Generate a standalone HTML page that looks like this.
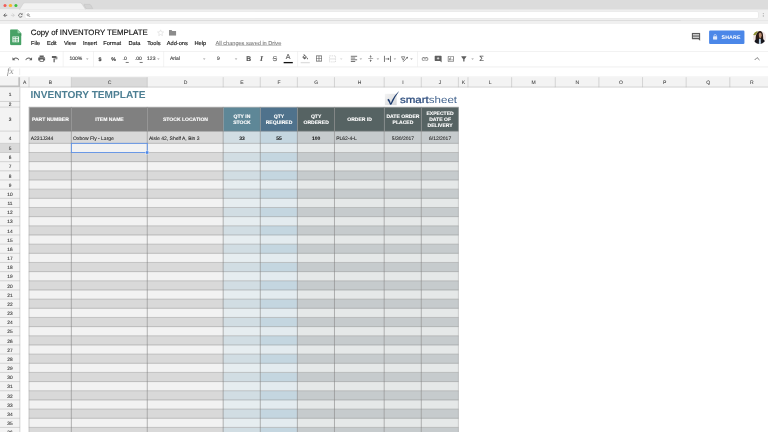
<!DOCTYPE html><html><head><meta charset="utf-8"><title>Copy of INVENTORY TEMPLATE</title><style>
*{box-sizing:border-box;margin:0;padding:0}
html,body{width:768px;height:432px;overflow:hidden;background:#fff}
body{text-rendering:geometricPrecision;font-family:"Liberation Sans",Arial,sans-serif}
#root{position:absolute;left:0;top:0;width:1760px;height:990px;transform:scale(0.4363636);transform-origin:0 0}
#blur{position:absolute;left:-55px;top:-55px;width:1870px;height:1100px;filter:blur(0.8px);background:#fff;overflow:hidden}
#in{position:absolute;left:55px;top:55px;width:1760px;height:990px}
.a{position:absolute}
.t{position:absolute;white-space:nowrap}
.menu{position:absolute;top:90px;font-size:13px;color:#111;-webkit-text-stroke:0.3px #111;white-space:nowrap;line-height:16px}
.ch{position:absolute;top:177px;height:23px;background:#f3f3f3;font-size:11.5px;color:#444;text-align:center;line-height:24px;-webkit-text-stroke:0.15px #444}
.rh{position:absolute;left:0;width:46px;background:#f3f3f3;font-size:11px;color:#333;text-align:center;-webkit-text-stroke:0.2px #333;overflow:hidden}
.c{position:absolute;font-size:11.45px;color:#111;white-space:nowrap;overflow:hidden;-webkit-text-stroke:0.08px #111}
.h{color:#fff;font-weight:bold;text-align:center;display:flex;align-items:center;justify-content:center;line-height:14.15px;white-space:normal;padding-top:3.5px;font-size:11.6px;-webkit-text-stroke:0.25px #fff}
.hl{position:absolute;height:2.3px;background:rgba(144,144,144,0.4)}
.vl{position:absolute;width:2.3px;background:rgba(140,140,140,0.52)}
.gh{position:absolute;height:2.3px;background:rgba(0,0,0,0.1)}
.gv{position:absolute;width:2.3px;background:rgba(0,0,0,0.1)}
.tb{position:absolute;top:118px;height:35px}
.sep{position:absolute;top:118px;width:1px;height:35px;background:#e3e3e3}
.car{position:absolute;top:133.5px;width:0;height:0;border-left:3.2px solid transparent;border-right:3.2px solid transparent;border-top:3.6px solid #999}
.ic{position:absolute}
</style></head><body><div id="root"><div id="blur"><div id="in">
<div class="a" style="left:-55px;top:-55px;width:1870px;height:77px;background:#dcdcdc"></div>
<svg class="a" style="left:40px;top:0" width="200" height="23" viewBox="0 0 200 23"><path d="M4 23 L13 8.5 Q14.5 6.5 17 6.5 L143 6.5 Q146 6.5 147.5 8.5 L157 23 Z" fill="#f2f2f2" stroke="#c4c4c4" stroke-width="1"/><path d="M153.5 10 L165 10 Q167 10 168 11.800 L172 18.500 Q172.800 20.300 170.800 20.300 L159.500 20.300 Q157.500 20.300 156.600 18.800 L152.600 11.800 Q151.800 10 153.500 10Z" fill="#d3d3d3" stroke="#bdbdbd" stroke-width="1"/></svg>
<div class="a" style="left:7.6px;top:8.6px;width:7.8px;height:7.8px;border-radius:50%;background:#f25b57"></div>
<div class="a" style="left:20.3px;top:8.6px;width:7.8px;height:7.8px;border-radius:50%;background:#f6b72e"></div>
<div class="a" style="left:32.5px;top:8.6px;width:7.8px;height:7.8px;border-radius:50%;background:#3cc13f"></div>
<div class="a" style="left:-55px;top:22px;width:1870px;height:24px;background:#f0f0f0"></div>
<div class="a" style="left:-55px;top:45.5px;width:1870px;height:2.8px;background:#e3e3e3"></div>
<div class="a" style="left:200px;top:20.7px;width:1600px;height:2.3px;background:#e5e5e5"></div>
<div class="a" style="left:-55px;top:48.3px;width:1870px;height:6.5px;background:#f0f0f0"></div>
<div class="a" style="left:0;top:45.5px;width:1560px;height:2.8px;background:#dcdcdc"></div>
<div class="a" style="left:58px;top:27px;width:1679px;height:15px;background:#fff;border-radius:3px;box-shadow:0 0 0 1px #e2e2e2"></div>
<svg class="a" style="left:4px;top:26px" width="70" height="18" viewBox="0 0 70 18"><path d="M12.5 9 H5 M8.6 5 L4.6 9 L8.6 13" fill="none" stroke="#5a5a5a" stroke-width="1.9"/><path d="M21 9 H28.5 M24.9 5 L28.9 9 L24.9 13" fill="none" stroke="#cdcdcd" stroke-width="1.9"/><path d="M45.8 6.4 A4.1 4.1 0 1 0 46.8 10.3" fill="none" stroke="#5a5a5a" stroke-width="1.7"/><path d="M47.6 3.6 V7.8 H43.4 Z" fill="#5a5a5a"/><circle cx="60.5" cy="8" r="2.5" fill="none" stroke="#666" stroke-width="1.4"/><path d="M62.3 9.9 L65 12.8" stroke="#666" stroke-width="1.5"/></svg>
<div class="a" style="left:1747.6px;top:30.3px;width:2px;height:2px;border-radius:50%;background:#777"></div>
<div class="a" style="left:1747.6px;top:33.6px;width:2px;height:2px;border-radius:50%;background:#777"></div>
<div class="a" style="left:1747.6px;top:36.9px;width:2px;height:2px;border-radius:50%;background:#777"></div>
<svg class="a" style="left:22.5px;top:67px" width="26.5" height="36.5" viewBox="0 0 28 38" preserveAspectRatio="none"><path d="M2.600 0 H18 L28 10 V35.400 Q28 38 25.400 38 H2.600 Q0 38 0 35.400 V2.600 Q0 0 2.600 0Z" fill="#47a266"/><path d="M18 0 L28 10 H20.600 Q18 10 18 7.400Z" fill="#92d0a7"/><path d="M20 10 H28 V16Z" fill="#3b8f57"/><path d="M5.800 17.200 H21.800 V31.200 H5.800Z M8 19.400 V21.400 H11.600 V19.400Z M13.600 19.400 V21.400 H19.600 V19.400Z M8 23.200 V25.200 H11.600 V23.200Z M13.600 23.200 V25.200 H19.600 V23.200Z M8 27 V29 H11.600 V27Z M13.600 27 V29 H19.600 V27Z" fill="#f4faf6" fill-rule="evenodd"/></svg>
<div class="t" id="title" style="left:70.5px;top:64.5px;font-size:17.9px;line-height:21px;color:#111;-webkit-text-stroke:0.35px #111">Copy of INVENTORY TEMPLATE</div>
<svg class="a" style="left:359px;top:66px" width="18" height="18" viewBox="0 0 24 24"><path d="M12 3.2 L14.7 9.2 L21.2 9.9 L16.3 14.3 L17.7 20.8 L12 17.5 L6.3 20.8 L7.7 14.3 L2.8 9.9 L9.3 9.2Z" fill="none" stroke="#d4d4d4" stroke-width="1.6"/></svg>
<svg class="a" style="left:387px;top:68.5px" width="17" height="13" viewBox="0 0 17 13"><path d="M1.2 0 H6.2 L7.8 1.8 H15.8 Q17 1.8 17 3 V11.8 Q17 13 15.8 13 H1.2 Q0 13 0 11.8 V1.2 Q0 0 1.2 0Z" fill="#8c8c8c"/></svg>
<div class="menu" style="left:71px">File</div>
<div class="menu" style="left:107.5px">Edit</div>
<div class="menu" style="left:146.5px">View</div>
<div class="menu" style="left:190px">Insert</div>
<div class="menu" style="left:236.5px">Format</div>
<div class="menu" style="left:294.5px">Data</div>
<div class="menu" style="left:337.5px">Tools</div>
<div class="menu" style="left:382px">Add-ons</div>
<div class="menu" style="left:445.5px">Help</div>
<div class="menu" style="left:494px;color:#777;-webkit-text-stroke:0.15px #777;text-decoration:underline;letter-spacing:-0.1px">All changes saved in Drive</div>
<svg class="a" style="left:1585px;top:75px" width="20" height="19" viewBox="0 0 20 19"><path d="M1.5 0 H18.5 Q20 0 20 1.5 V19 L15.5 14.8 H1.5 Q0 14.8 0 13.3 V1.5 Q0 0 1.5 0Z" fill="#5b5b5b"/><rect x="3" y="3" width="14" height="2" fill="#dcdcdc"/><rect x="3" y="6.4" width="14" height="2" fill="#dcdcdc"/><rect x="3" y="9.8" width="14" height="2" fill="#dcdcdc"/></svg>
<div class="a" style="left:1625px;top:69.5px;width:81px;height:31.5px;background:#4b87e8;border-radius:2.5px"></div>
<svg class="a" style="left:1634px;top:78px" width="10" height="13" viewBox="0 0 10 13"><rect x="0" y="5" width="10" height="8" rx="1" fill="#dfe9fb"/><path d="M2.4 5.5 V3.6 A2.6 2.6 0 0 1 7.6 3.6 V5.5" fill="none" stroke="#dfe9fb" stroke-width="1.5"/></svg>
<div class="t" style="left:1653.5px;top:78.5px;font-size:12px;line-height:14px;font-weight:bold;color:#fff;letter-spacing:0.3px">SHARE</div>
<svg class="a" style="left:1725px;top:69.500px" width="31" height="31" viewBox="0 0 31 31"><defs><clipPath id="av"><circle cx="15.500" cy="15.500" r="15.300"/></clipPath></defs><g clip-path="url(#av)"><rect width="31" height="31" fill="#f1e6e5"/><path d="M0 9 Q2 2 9 0.500 L12 3 Q9 7 6 10.500 Q3 11 0 9Z" fill="#8c9030"/><path d="M7 26 Q5.500 12 10 5.500 Q13 0.800 17 1.200 Q22.500 2 23.500 10 Q24.200 18 24 26Z" fill="#2b1a13"/><path d="M14 8 Q14.500 5 17.300 5.200 Q20.600 6 20.500 11 Q20 16.500 17.500 17.700 Q15 17 14.300 13Z" fill="#bd8f73"/><path d="M3 31 Q3.500 21 10 19 L15 18.500 L19 18.500 L23 19.500 Q28.500 22 29 31Z" fill="#16161d"/><path d="M14.400 19 L18.400 19 L18.800 31 L14 31Z" fill="#b7cde0"/><path d="M9 20 Q8 12 11 7 Q13 12 14.200 19Z" fill="#2b1a13"/></g></svg>
<div class="a" style="left:-55px;top:117px;width:1870px;height:1px;background:#e0e0e0"></div>
<div class="a" style="left:-55px;top:153px;width:1870px;height:1px;background:#dadada"></div>
<div class="sep" style="left:144px"></div>
<div class="sep" style="left:213.5px"></div>
<div class="sep" style="left:375px"></div>
<div class="sep" style="left:681.5px"></div>
<div class="sep" style="left:956px"></div>
<div class="car" style="left:196.8px;"></div>
<div class="car" style="left:360.3px;"></div>
<div class="car" style="left:464.8px;"></div>
<div class="car" style="left:537.8px;"></div>
<div class="car" style="left:778.8px;border-top-color:#d0d0d0"></div>
<div class="car" style="left:823.8px;"></div>
<div class="car" style="left:862.8px;"></div>
<div class="car" style="left:902.3px;"></div>
<div class="car" style="left:940.3px;"></div>
<div class="car" style="left:1079.8px;"></div>
<svg class="ic" style="left:26.5px;top:125.5px" width="18" height="18" viewBox="0 0 24 24"><path d="M12.5 8c-2.65 0-5.05.99-6.9 2.6L2 7v9h9l-3.620-3.620c1.390-1.160 3.160-1.880 5.120-1.880 3.540 0 6.550 2.310 7.600 5.500l2.370-.78C21.080 11.030 17.150 8 12.500 8z" fill="#5f5f5f"/></svg>
<svg class="ic" style="left:57.0px;top:125.5px" width="18" height="18" viewBox="0 0 24 24"><path d="M18.400 10.600C16.550 8.990 14.150 8 11.500 8c-4.650 0-8.580 3.030-9.960 7.220L3.900 16c1.050-3.190 4.050-5.500 7.600-5.500 1.950 0 3.730.72 5.120 1.880L13 16h9V7l-3.600 3.600z" fill="#5f5f5f"/></svg>
<svg class="ic" style="left:86.0px;top:125.0px" width="19" height="19" viewBox="0 0 24 24"><path d="M19 8H5c-1.660 0-3 1.340-3 3v6h4v4h12v-4h4v-6c0-1.660-1.340-3-3-3zm-3 11H8v-5h8v5zm3-7c-.55 0-1-.45-1-1s.45-1 1-1 1 .45 1 1-.45 1-1 1zm-1-9H6v4h12V3z" fill="#5f5f5f"/></svg>
<svg class="ic" style="left:116.2px;top:126.8px" width="17.5" height="17.5" viewBox="0 0 24 24"><path d="M18 4V3c0-.55-.45-1-1-1H5c-.55 0-1 .45-1 1v4c0 .55.45 1 1 1h12c.55 0 1-.45 1-1V6h1v4H9v11c0 .55.45 1 1 1h2c.55 0 1-.45 1-1v-9h8V4h-3z" fill="#5f5f5f"/></svg>
<div class="t" style="left:159px;top:128px;font-size:11.5px;line-height:15px;color:#444;-webkit-text-stroke:0.3px #444;">100%</div>
<div class="t" style="left:226px;top:128px;font-size:12px;line-height:15px;color:#444;-webkit-text-stroke:0.3px #444;font-weight:bold">$</div>
<div class="t" style="left:255px;top:128px;font-size:12px;line-height:15px;color:#444;-webkit-text-stroke:0.3px #444;font-weight:bold">%</div>
<div class="t" style="left:281px;top:128px;font-size:11.5px;line-height:15px;color:#444;-webkit-text-stroke:0.3px #444;">.0</div>
<div class="a" style="left:288px;top:142px;width:7px;height:1.6px;background:#666"></div>
<div class="t" style="left:309px;top:128px;font-size:11.5px;line-height:15px;color:#444;-webkit-text-stroke:0.3px #444;">.00</div>
<div class="a" style="left:320px;top:142px;width:7px;height:1.6px;background:#666"></div>
<div class="t" style="left:337px;top:128px;font-size:11.5px;line-height:15px;color:#444;-webkit-text-stroke:0.3px #444;">123</div>
<div class="t" style="left:389.5px;top:128px;font-size:11.5px;line-height:15px;color:#444;-webkit-text-stroke:0.3px #444;">Arial</div>
<div class="t" style="left:497.5px;top:128px;font-size:11.5px;line-height:15px;color:#444;-webkit-text-stroke:0.3px #444;">9</div>
<div class="t" style="left:564.5px;top:128px;font-size:15.5px;line-height:15px;color:#555;-webkit-text-stroke:0.3px #555;font-weight:bold;top:125.5px;line-height:18px">B</div>
<div class="t" style="left:596px;top:128px;font-size:17px;line-height:15px;color:#555;-webkit-text-stroke:0.3px #555;font-style:italic;font-family:'Liberation Serif',serif;font-weight:bold;top:125px;line-height:18px">I</div>
<div class="t" style="left:624.5px;top:128px;font-size:16px;line-height:15px;color:#666;-webkit-text-stroke:0.3px #666;text-decoration:line-through;top:125.5px;line-height:18px">S</div>
<div class="t" style="left:655px;top:128px;font-size:16px;line-height:15px;color:#555;-webkit-text-stroke:0.3px #555;top:122.5px;line-height:18px">A</div>
<div class="a" style="left:650px;top:141.5px;width:21px;height:3px;background:#111"></div>
<svg class="ic" style="left:691.0px;top:124.0px" width="17" height="17" viewBox="0 0 24 24"><path d="M16.560 8.940L7.620 0 6.210 1.410l2.380 2.380-5.150 5.150c-.59.59-.59 1.540 0 2.120l5.500 5.500c.29.29.68.44 1.060.44s.77-.15 1.060-.44l5.500-5.500c.59-.58.59-1.530 0-2.120zM5.210 10L10 5.210 14.790 10H5.210zM19 11.500s-2 2.170-2 3.500c0 1.100.9 2 2 2s2-.9 2-2c0-1.330-2-3.500-2-3.500z" fill="#5f5f5f"/></svg>
<div class="a" style="left:689px;top:141.8px;width:21px;height:2.8px;background:#dedede"></div>
<svg class="ic" style="left:721.8px;top:125.3px" width="18" height="18" viewBox="0 0 24 24"><path d="M3 3v18h18V3H3zm8 16H5v-6h6v6zm0-8H5V5h6v6zm8 8h-6v-6h6v6zm0-8h-6V5h6v6z" fill="#5f5f5f"/></svg>
<svg class="ic" style="left:752.5px;top:125.5px" width="18" height="18" viewBox="0 0 18 18"><path d="M2 2 H16 V16 H2Z" fill="none" stroke="#d4d4d4" stroke-width="2" stroke-dasharray="3 2"/><path d="M2 9 H16" stroke="#dcdcdc" stroke-width="2"/></svg>
<svg class="ic" style="left:802.3px;top:125.5px" width="18" height="18" viewBox="0 0 18 18"><path d="M2 3 H16.5 M2 7 H12 M2 11 H16.5 M2 15 H12" stroke="#5f5f5f" stroke-width="2"/></svg>
<svg class="ic" style="left:841.0px;top:126.0px" width="17" height="17" viewBox="0 0 24 24"><path d="M8 19h3v4h2v-4h3l-4-4-4 4zm8-14h-3V1h-2v4H8l4 4 4-4zM4 11v2h16v-2H4z" fill="#5f5f5f"/></svg>
<svg class="ic" style="left:878.5px;top:125.5px" width="18" height="18" viewBox="0 0 18 18"><path d="M2 2 V16 M16 2 V16" stroke="#5f5f5f" stroke-width="2"/><path d="M4.500 9 H11" stroke="#5f5f5f" stroke-width="1.600"/><path d="M10 5.800 L13.600 9 L10 12.200Z" fill="#5f5f5f"/></svg>
<svg class="ic" style="left:917.5px;top:125.5px" width="18" height="18" viewBox="0 0 18 18"><path d="M2 4 L9.500 4 L6 12Z" fill="none" stroke="#5f5f5f" stroke-width="1.600"/><path d="M6 15.500 L16 5" stroke="#5f5f5f" stroke-width="1.800"/><path d="M16.500 4 V8.500 L12.500 5Z" fill="#5f5f5f"/></svg>
<svg class="ic" style="left:964.5px;top:125.5px" width="18" height="18" viewBox="0 0 24 24"><path d="M3.900 12c0-1.710 1.390-3.100 3.100-3.100h4V7H7c-2.760 0-5 2.240-5 5s2.240 5 5 5h4v-1.900H7c-1.710 0-3.100-1.390-3.100-3.100zM8 13h8v-2H8v2zm9-6h-4v1.900h4c1.710 0 3.100 1.390 3.100 3.100s-1.390 3.100-3.100 3.100h-4V17h4c2.760 0 5-2.240 5-5s-2.240-5-5-5z" fill="#5f5f5f"/></svg>
<svg class="ic" style="left:994.5px;top:126.0px" width="18" height="18" viewBox="0 0 18 18"><path d="M2.500 1.500 H15.500 Q17 1.500 17 3 V17 L13.500 13.800 H2.500 Q1 13.800 1 12.300 V3 Q1 1.500 2.500 1.500Z" fill="#5f5f5f"/><path d="M9 4.800 V10.600 M6.100 7.700 H11.900" stroke="#fff" stroke-width="1.500"/></svg>
<svg class="ic" style="left:1024.0px;top:125.5px" width="18" height="18" viewBox="0 0 24 24"><path d="M19 3H5c-1.100 0-2 .9-2 2v14c0 1.100.9 2 2 2h14c1.100 0 2-.9 2-2V5c0-1.100-.9-2-2-2zm0 16H5V5h14v14zM7 10h2v7H7zm4-3h2v10h-2zm4 6h2v4h-2z" fill="#5f5f5f"/></svg>
<svg class="ic" style="left:1053.5px;top:125.5px" width="18" height="18" viewBox="0 0 24 24"><path d="M4.250 5.610C6.270 8.200 10 13 10 13v6c0 .55.45 1 1 1h2c.55 0 1-.45 1-1v-6s3.720-4.800 5.740-7.390c.51-.66.04-1.610-.79-1.610H5.040c-.83 0-1.300.95-.79 1.610z" fill="#5f5f5f"/></svg>
<div class="t" style="left:1098.5px;top:128px;font-size:17px;line-height:15px;color:#555;-webkit-text-stroke:0.3px #555;top:126px;line-height:18px">Σ</div>
<svg class="ic" style="left:1726.0px;top:126.0px" width="18" height="18" viewBox="0 0 18 18"><path d="M3.500 11.500 L9 6 L14.500 11.500" fill="none" stroke="#6a6a6a" stroke-width="2"/></svg>
<div class="a" style="left:-55px;top:176px;width:1870px;height:1px;background:#d0d0d0"></div>
<div class="t" style="left:16px;top:152px;font-size:21px;line-height:20px;font-style:italic;font-family:'Liberation Serif',serif;color:#8c8c8c">fx</div>
<div class="a" style="left:44.5px;top:157px;width:1px;height:15px;background:#d8d8d8"></div>
<div class="ch" style="left:0;width:46px"></div>
<div class="ch" style="left:46px;width:21px;">A</div>
<div class="ch" style="left:67px;width:97px;">B</div>
<div class="ch" style="left:164px;width:174px;background:#dadada;">C</div>
<div class="ch" style="left:338px;width:174px;">D</div>
<div class="ch" style="left:512px;width:85px;">E</div>
<div class="ch" style="left:597px;width:85px;">F</div>
<div class="ch" style="left:682px;width:85px;">G</div>
<div class="ch" style="left:767px;width:114px;">H</div>
<div class="ch" style="left:881px;width:85px;">I</div>
<div class="ch" style="left:966px;width:85px;">J</div>
<div class="ch" style="left:1051px;width:22px;">K</div>
<div class="ch" style="left:1073px;width:100px;">L</div>
<div class="ch" style="left:1173px;width:100px;">M</div>
<div class="ch" style="left:1273px;width:100px;">N</div>
<div class="ch" style="left:1373px;width:100px;">O</div>
<div class="ch" style="left:1473px;width:100px;">P</div>
<div class="ch" style="left:1573px;width:100px;">Q</div>
<div class="ch" style="left:1673px;width:100px;">R</div>
<div class="rh" style="top:200px;height:33px;line-height:37px;">1</div>
<div class="rh" style="top:233px;height:13px;line-height:17px;">2</div>
<div class="rh" style="top:246px;height:55px;line-height:59px;">3</div>
<div class="rh" style="top:301px;height:28px;line-height:32px;">4</div>
<div class="rh" style="top:329px;height:21px;line-height:25px;background:#dadada;">5</div>
<div class="rh" style="top:350px;height:21px;line-height:25px;">6</div>
<div class="rh" style="top:371px;height:21px;line-height:25px;">7</div>
<div class="rh" style="top:392px;height:21px;line-height:25px;">8</div>
<div class="rh" style="top:413px;height:21px;line-height:25px;">9</div>
<div class="rh" style="top:434px;height:21px;line-height:25px;">10</div>
<div class="rh" style="top:455px;height:21px;line-height:25px;">11</div>
<div class="rh" style="top:476px;height:21px;line-height:25px;">12</div>
<div class="rh" style="top:497px;height:21px;line-height:25px;">13</div>
<div class="rh" style="top:518px;height:21px;line-height:25px;">14</div>
<div class="rh" style="top:539px;height:21px;line-height:25px;">15</div>
<div class="rh" style="top:560px;height:21px;line-height:25px;">16</div>
<div class="rh" style="top:581px;height:21px;line-height:25px;">17</div>
<div class="rh" style="top:602px;height:21px;line-height:25px;">18</div>
<div class="rh" style="top:623px;height:21px;line-height:25px;">19</div>
<div class="rh" style="top:644px;height:21px;line-height:25px;">20</div>
<div class="rh" style="top:665px;height:21px;line-height:25px;">21</div>
<div class="rh" style="top:686px;height:21px;line-height:25px;">22</div>
<div class="rh" style="top:707px;height:21px;line-height:25px;">23</div>
<div class="rh" style="top:728px;height:21px;line-height:25px;">24</div>
<div class="rh" style="top:749px;height:21px;line-height:25px;">25</div>
<div class="rh" style="top:770px;height:21px;line-height:25px;">26</div>
<div class="rh" style="top:791px;height:21px;line-height:25px;">27</div>
<div class="rh" style="top:812px;height:21px;line-height:25px;">28</div>
<div class="rh" style="top:833px;height:21px;line-height:25px;">29</div>
<div class="rh" style="top:854px;height:21px;line-height:25px;">30</div>
<div class="rh" style="top:875px;height:21px;line-height:25px;">31</div>
<div class="rh" style="top:896px;height:21px;line-height:25px;">32</div>
<div class="rh" style="top:917px;height:21px;line-height:25px;">33</div>
<div class="rh" style="top:938px;height:21px;line-height:25px;">34</div>
<div class="rh" style="top:959px;height:21px;line-height:25px;">35</div>
<div class="rh" style="top:980px;height:21px;line-height:25px;">36</div>
<div class="rh" style="top:1001px;height:21px;line-height:25px;">37</div>
<div class="rh" style="top:1022px;height:21px;line-height:25px;">38</div>
<div class="t" style="left:70px;top:202px;font-size:23.2px;line-height:28px;font-weight:bold;color:#4d7f93">INVENTORY TEMPLATE</div>
<svg class="a" style="left:880px;top:205px" width="175" height="42" viewBox="0 0 175 42"><defs><linearGradient id="lg" x1="0" y1="0" x2="1" y2="1"><stop offset="0" stop-color="#f4f4f4"/><stop offset="1" stop-color="#d4d6d9"/></linearGradient></defs><rect x="2" y="10" width="27" height="26" fill="url(#lg)"/><path d="M7.5 23.5 L11 21.5 Q14 26 15.5 31.5 Q22 14 35 3.5 Q25.5 16 17.2 34.5 L14 35 Q11.5 28 7.5 23.5Z" fill="#1e3c6e"/><text x="36.5" y="32" font-family="Liberation Sans, Arial, sans-serif" font-size="22.5" textLength="131" lengthAdjust="spacingAndGlyphs"><tspan fill="#2a4a7c" stroke="#2a4a7c" stroke-width="0.55">smart</tspan><tspan fill="#44658f">sheet</tspan></text></svg>
<svg class="a" style="left:0;top:0" width="1800" height="1010" viewBox="0 0 1800 1010"><rect x="67" y="246" width="97" height="764" fill="#f2f2f2"/><path d="M67 301h97v28h-97zM67 350h97v21h-97zM67 392h97v21h-97zM67 434h97v21h-97zM67 476h97v21h-97zM67 518h97v21h-97zM67 560h97v21h-97zM67 602h97v21h-97zM67 644h97v21h-97zM67 686h97v21h-97zM67 728h97v21h-97zM67 770h97v21h-97zM67 812h97v21h-97zM67 854h97v21h-97zM67 896h97v21h-97zM67 938h97v21h-97zM67 980h97v21h-97zM67 1022h97v21h-97z" fill="#d9d9d9"/><rect x="67" y="246" width="97" height="55" fill="#808080"/><rect x="164" y="246" width="174" height="764" fill="#f2f2f2"/><path d="M164 301h174v28h-174zM164 350h174v21h-174zM164 392h174v21h-174zM164 434h174v21h-174zM164 476h174v21h-174zM164 518h174v21h-174zM164 560h174v21h-174zM164 602h174v21h-174zM164 644h174v21h-174zM164 686h174v21h-174zM164 728h174v21h-174zM164 770h174v21h-174zM164 812h174v21h-174zM164 854h174v21h-174zM164 896h174v21h-174zM164 938h174v21h-174zM164 980h174v21h-174zM164 1022h174v21h-174z" fill="#d9d9d9"/><rect x="164" y="246" width="174" height="55" fill="#808080"/><rect x="338" y="246" width="174" height="764" fill="#f2f2f2"/><path d="M338 301h174v28h-174zM338 350h174v21h-174zM338 392h174v21h-174zM338 434h174v21h-174zM338 476h174v21h-174zM338 518h174v21h-174zM338 560h174v21h-174zM338 602h174v21h-174zM338 644h174v21h-174zM338 686h174v21h-174zM338 728h174v21h-174zM338 770h174v21h-174zM338 812h174v21h-174zM338 854h174v21h-174zM338 896h174v21h-174zM338 938h174v21h-174zM338 980h174v21h-174zM338 1022h174v21h-174z" fill="#d9d9d9"/><rect x="338" y="246" width="174" height="55" fill="#808080"/><rect x="512" y="246" width="85" height="764" fill="#e6edf0"/><path d="M512 301h85v28h-85zM512 350h85v21h-85zM512 392h85v21h-85zM512 434h85v21h-85zM512 476h85v21h-85zM512 518h85v21h-85zM512 560h85v21h-85zM512 602h85v21h-85zM512 644h85v21h-85zM512 686h85v21h-85zM512 728h85v21h-85zM512 770h85v21h-85zM512 812h85v21h-85zM512 854h85v21h-85zM512 896h85v21h-85zM512 938h85v21h-85zM512 980h85v21h-85zM512 1022h85v21h-85z" fill="#d1dde3"/><rect x="512" y="246" width="85" height="55" fill="#5e8797"/><rect x="597" y="246" width="85" height="764" fill="#e3ebef"/><path d="M597 301h85v28h-85zM597 350h85v21h-85zM597 392h85v21h-85zM597 434h85v21h-85zM597 476h85v21h-85zM597 518h85v21h-85zM597 560h85v21h-85zM597 602h85v21h-85zM597 644h85v21h-85zM597 686h85v21h-85zM597 728h85v21h-85zM597 770h85v21h-85zM597 812h85v21h-85zM597 854h85v21h-85zM597 896h85v21h-85zM597 938h85v21h-85zM597 980h85v21h-85zM597 1022h85v21h-85z" fill="#c4d6e0"/><rect x="597" y="246" width="85" height="55" fill="#4f728c"/><rect x="682" y="246" width="85" height="764" fill="#e5e8e8"/><path d="M682 301h85v28h-85zM682 350h85v21h-85zM682 392h85v21h-85zM682 434h85v21h-85zM682 476h85v21h-85zM682 518h85v21h-85zM682 560h85v21h-85zM682 602h85v21h-85zM682 644h85v21h-85zM682 686h85v21h-85zM682 728h85v21h-85zM682 770h85v21h-85zM682 812h85v21h-85zM682 854h85v21h-85zM682 896h85v21h-85zM682 938h85v21h-85zM682 980h85v21h-85zM682 1022h85v21h-85z" fill="#c6cbcd"/><rect x="682" y="246" width="85" height="55" fill="#566363"/><rect x="767" y="246" width="114" height="764" fill="#e5e8e8"/><path d="M767 301h114v28h-114zM767 350h114v21h-114zM767 392h114v21h-114zM767 434h114v21h-114zM767 476h114v21h-114zM767 518h114v21h-114zM767 560h114v21h-114zM767 602h114v21h-114zM767 644h114v21h-114zM767 686h114v21h-114zM767 728h114v21h-114zM767 770h114v21h-114zM767 812h114v21h-114zM767 854h114v21h-114zM767 896h114v21h-114zM767 938h114v21h-114zM767 980h114v21h-114zM767 1022h114v21h-114z" fill="#c6cbcd"/><rect x="767" y="246" width="114" height="55" fill="#566363"/><rect x="881" y="246" width="85" height="764" fill="#e5e8e8"/><path d="M881 301h85v28h-85zM881 350h85v21h-85zM881 392h85v21h-85zM881 434h85v21h-85zM881 476h85v21h-85zM881 518h85v21h-85zM881 560h85v21h-85zM881 602h85v21h-85zM881 644h85v21h-85zM881 686h85v21h-85zM881 728h85v21h-85zM881 770h85v21h-85zM881 812h85v21h-85zM881 854h85v21h-85zM881 896h85v21h-85zM881 938h85v21h-85zM881 980h85v21h-85zM881 1022h85v21h-85z" fill="#c6cbcd"/><rect x="881" y="246" width="85" height="55" fill="#566363"/><rect x="966" y="246" width="85" height="764" fill="#e5e8e8"/><path d="M966 301h85v28h-85zM966 350h85v21h-85zM966 392h85v21h-85zM966 434h85v21h-85zM966 476h85v21h-85zM966 518h85v21h-85zM966 560h85v21h-85zM966 602h85v21h-85zM966 644h85v21h-85zM966 686h85v21h-85zM966 728h85v21h-85zM966 770h85v21h-85zM966 812h85v21h-85zM966 854h85v21h-85zM966 896h85v21h-85zM966 938h85v21h-85zM966 980h85v21h-85zM966 1022h85v21h-85z" fill="#c6cbcd"/><rect x="966" y="246" width="85" height="55" fill="#566363"/><path d="M66 300.5H1051M66 328.5H1051M66 349.5H1051M66 370.5H1051M66 391.5H1051M66 412.5H1051M66 433.5H1051M66 454.5H1051M66 475.5H1051M66 496.5H1051M66 517.5H1051M66 538.5H1051M66 559.5H1051M66 580.5H1051M66 601.5H1051M66 622.5H1051M66 643.5H1051M66 664.5H1051M66 685.5H1051M66 706.5H1051M66 727.5H1051M66 748.5H1051M66 769.5H1051M66 790.5H1051M66 811.5H1051M66 832.5H1051M66 853.5H1051M66 874.5H1051M66 895.5H1051M66 916.5H1051M66 937.5H1051M66 958.5H1051M66 979.5H1051M66 1000.5H1051M66 1021.5H1051M66 1042.5H1051M66 245.5H1051" stroke="#8a8a8a" stroke-width="1" fill="none"/><path d="M163.5 245V1010M337.5 245V1010M511.5 245V1010M596.5 245V1010M681.5 245V1010M766.5 245V1010M880.5 245V1010M965.5 245V1010" stroke="#7c7c7c" stroke-width="1.3" fill="none"/><path d="M1050.5 245V1010" stroke="#a0a0a0" stroke-width="1" fill="none"/><path d="M66.5 245V1010" stroke="#a0a0a0" stroke-width="1.3" fill="none"/><path d="M66.5 177V200M163.5 177V200M337.5 177V200M511.5 177V200M596.5 177V200M681.5 177V200M766.5 177V200M880.5 177V200M965.5 177V200M1050.5 177V200M1072.5 177V200M1172.5 177V200M1272.5 177V200M1372.5 177V200M1472.5 177V200M1572.5 177V200M1672.5 177V200M1772.5 177V200M0 232.5H46M0 245.5H46M0 300.5H46M0 328.5H46M0 349.5H46M0 370.5H46M0 391.5H46M0 412.5H46M0 433.5H46M0 454.5H46M0 475.5H46M0 496.5H46M0 517.5H46M0 538.5H46M0 559.5H46M0 580.5H46M0 601.5H46M0 622.5H46M0 643.5H46M0 664.5H46M0 685.5H46M0 706.5H46M0 727.5H46M0 748.5H46M0 769.5H46M0 790.5H46M0 811.5H46M0 832.5H46M0 853.5H46M0 874.5H46M0 895.5H46M0 916.5H46M0 937.5H46M0 958.5H46M0 979.5H46M0 1000.5H46M0 1021.5H46M0 1042.5H46M46 199.5H1800M45.5 200V1010" stroke="#b4b4b4" stroke-width="1.2" fill="none"/><path d="M44 177V200M0 198H46" stroke="#c0c0c0" stroke-width="4" fill="none"/><rect x="163.5" y="328.5" width="174.0" height="21.0" fill="none" stroke="#5890ec" stroke-width="1.9"/><rect x="334.0" y="346.0" width="7" height="7" fill="#4a86e8" stroke="#fff" stroke-width="1"/></svg>
<div class="c h" style="left:67px;top:246px;width:97px;height:55px"><span>PART NUMBER</span></div>
<div class="c" style="left:67px;top:301px;width:97px;height:28px;padding-left:3.5px;line-height:33px;">A231J344</div>
<div class="c h" style="left:164px;top:246px;width:174px;height:55px"><span>ITEM NAME</span></div>
<div class="c" style="left:164px;top:301px;width:174px;height:28px;padding-left:3.5px;line-height:33px;">Oxbow Fly - Large</div>
<div class="c h" style="left:338px;top:246px;width:174px;height:55px"><span>STOCK LOCATION</span></div>
<div class="c" style="left:338px;top:301px;width:174px;height:28px;padding-left:3.5px;line-height:33px;">Aisle 42, Shelf A, Bin 3</div>
<div class="c h" style="left:512px;top:246px;width:85px;height:55px"><span>QTY IN<br>STOCK</span></div>
<div class="c" style="left:512px;top:301px;width:85px;height:28px;text-align:center;font-weight:bold;line-height:33px;">33</div>
<div class="c h" style="left:597px;top:246px;width:85px;height:55px"><span>QTY<br>REQUIRED</span></div>
<div class="c" style="left:597px;top:301px;width:85px;height:28px;text-align:center;font-weight:bold;line-height:33px;">55</div>
<div class="c h" style="left:682px;top:246px;width:85px;height:55px"><span>QTY<br>ORDERED</span></div>
<div class="c" style="left:682px;top:301px;width:85px;height:28px;text-align:center;font-weight:bold;line-height:33px;">100</div>
<div class="c h" style="left:767px;top:246px;width:114px;height:55px"><span>ORDER ID</span></div>
<div class="c" style="left:767px;top:301px;width:114px;height:28px;padding-left:3.5px;line-height:33px;">PL62-4-L</div>
<div class="c h" style="left:881px;top:246px;width:85px;height:55px"><span>DATE ORDER<br>PLACED</span></div>
<div class="c" style="left:881px;top:301px;width:85px;height:28px;text-align:center;line-height:33px;">5/30/2017</div>
<div class="c h" style="left:966px;top:246px;width:85px;height:55px"><span>EXPECTED<br>DATE OF<br>DELIVERY</span></div>
<div class="c" style="left:966px;top:301px;width:85px;height:28px;text-align:center;line-height:33px;">6/12/2017</div>
</div></div></div></body></html>
